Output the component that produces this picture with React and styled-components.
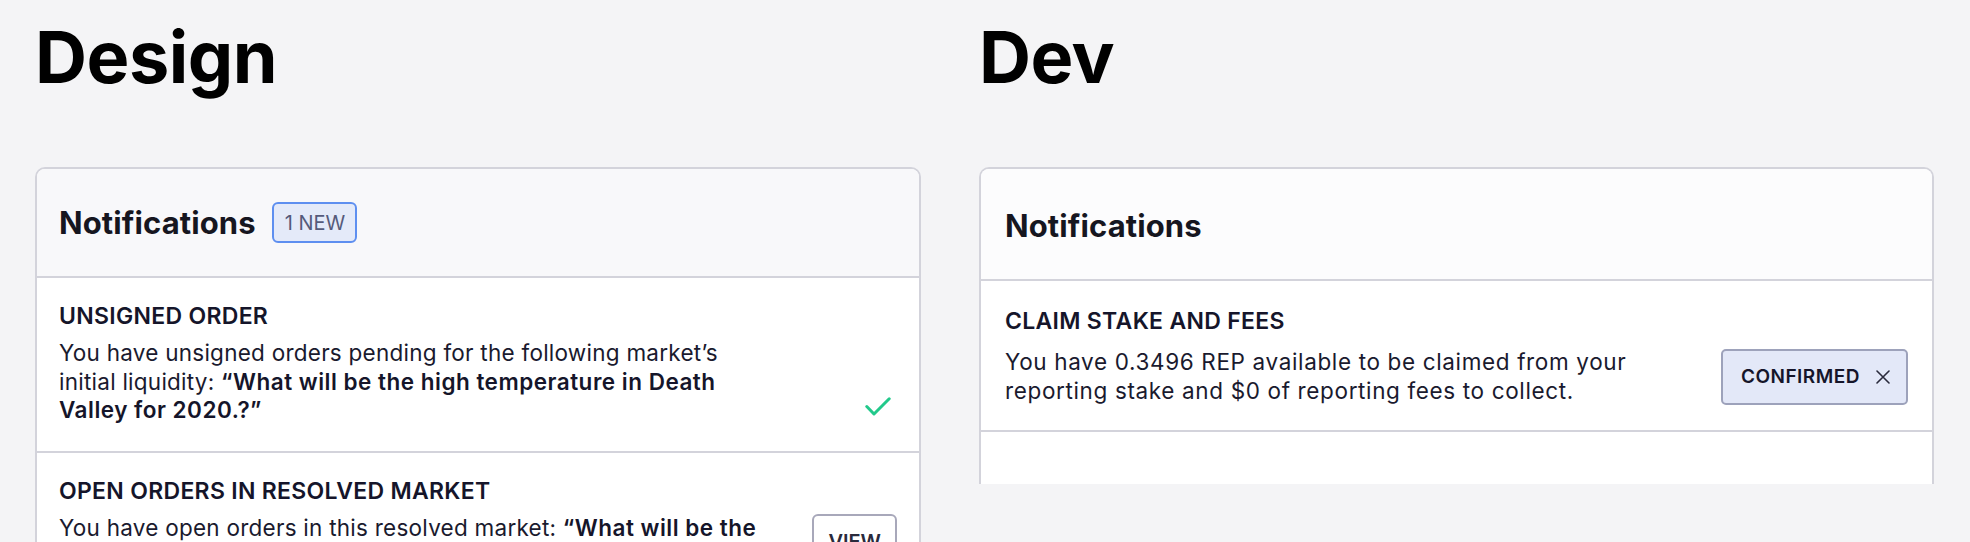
import React from 'react';
import styled, { createGlobalStyle } from 'styled-components';

const GlobalStyle = createGlobalStyle`
  body {
    margin: 0;
    background: #f4f4f6;
    font-family: Inter, "Noto Sans", sans-serif;
    overflow: hidden;
  }
`;

const CheckIcon = () => (
  <svg width="26" height="20" viewBox="0 0 26 20" fill="none">
    <polyline points="1.8,9.5 9,17 24.2,1.8" stroke="#22c98b" strokeWidth="3" strokeLinecap="round" strokeLinejoin="round" />
  </svg>
);

const CloseIcon = () => (
  <svg width="14" height="14" viewBox="0 0 14 14" fill="none">
    <path d="M1 1L13 13M13 1L1 13" stroke="#2a2a3c" strokeWidth="1.6" strokeLinecap="round" />
  </svg>
);

const App = () => {
  return (
    <>
      <GlobalStyle />
      <Page>
        <Column>
          <BigTitle>Design</BigTitle>
          <Card>
            <Header>
              <HeaderTitle>Notifications</HeaderTitle>
              <Badge>1 NEW</Badge>
            </Header>
            <Row>
              <RowTitle>UNSIGNED ORDER</RowTitle>
              <RowBody $gap={9}>
                <BodyText $max={745} $spacing={0.25} $boldSpacing={0.5}>
                  You have unsigned orders pending for the following market’s
                  <br />
                  initial liquidity: <b>“What will be the high temperature in Death</b>
                  <br />
                  <b>Valley for 2020.?”</b>
                </BodyText>
                <CheckWrap>
                  <CheckIcon />
                </CheckWrap>
              </RowBody>
            </Row>
            <Row>
              <RowTitle>OPEN ORDERS IN RESOLVED MARKET</RowTitle>
              <RowBody $gap={9}>
                <BodyText $max={745} $spacing={0.25} $boldSpacing={0.5}>
                  You have open orders in this resolved market: <b>“What will be the</b>
                  <br />
                  <b>high temperature in Death Valley for 2020.?”</b>
                </BodyText>
                <ViewButton>VIEW</ViewButton>
              </RowBody>
            </Row>
          </Card>
        </Column>
        <Column>
          <BigTitle>Dev</BigTitle>
          <Card $clipped>
            <Header $dev>
              <HeaderTitle>Notifications</HeaderTitle>
            </Header>
            <Row $dev>
              <RowTitle>CLAIM STAKE AND FEES</RowTitle>
              <RowBody $gap={13}>
                <BodyText $spacing={0.64}>
                  You have 0.3496 REP available to be claimed from your reporting stake and $0 of
                  reporting fees to collect.
                </BodyText>
                <ConfirmedButton>
                  CONFIRMED
                  <CloseIcon />
                </ConfirmedButton>
              </RowBody>
            </Row>
          </Card>
        </Column>
      </Page>
    </>
  );
};

export default App;

const Page = styled.div`
  display: grid;
  grid-template-columns: 886px 955px;
  column-gap: 58px;
  padding-left: 35px;
`;

const Column = styled.div`
  display: flex;
  flex-direction: column;
`;

const BigTitle = styled.h1`
  margin: 13px 0 67px;
  font-size: 72px;
  line-height: 87px;
  font-weight: 700;
  letter-spacing: -0.5px;
  color: #000;
`;

const Card = styled.div`
  background: #fff;
  border: 2px solid #d3d3db;
  border-radius: 10px;
  overflow: hidden;
  ${(p) =>
    p.$clipped &&
    `
    height: 315px;
    border-bottom: none;
    border-radius: 10px 10px 0 0;
  `}
`;

const Header = styled.div`
  display: flex;
  align-items: center;
  gap: 16px;
  min-height: ${(p) => (p.$dev ? '112px' : '109px')};
  padding: ${(p) => (p.$dev ? '3px 24px 0' : '0 22px')};
  background: ${(p) => (p.$dev ? '#fcfcfd' : '#f8f8fa')};
  border-bottom: 2px solid #d3d3db;
  box-sizing: border-box;
`;

const HeaderTitle = styled.h2`
  margin: 0;
  font-size: 31px;
  font-weight: 700;
  letter-spacing: 0.1px;
  color: #16161f;
`;

const Badge = styled.span`
  display: inline-flex;
  align-items: center;
  height: 41px;
  box-sizing: border-box;
  padding: 0 10px 0 11px;
  border: 2px solid #5e8ff0;
  border-radius: 6px;
  background: #e4eaf9;
  color: #555a7b;
  font-size: 20px;
  font-weight: 400;
`;

const Row = styled.div`
  padding: ${(p) => (p.$dev ? '26px 24px 25px' : '24px 22px 26px')};
  border-bottom: 2px solid #d3d3db;
`;

const RowTitle = styled.div`
  font-size: 23px;
  line-height: 28px;
  font-weight: 600;
  letter-spacing: 0.3px;
  color: #15152a;
`;

const RowBody = styled.div`
  display: flex;
  align-items: center;
  justify-content: space-between;
  gap: 24px;
  margin-top: ${(p) => p.$gap}px;
`;

const BodyText = styled.p`
  margin: 0;
  flex: 1;
  max-width: ${(p) => (p.$max ? `${p.$max}px` : 'none')};
  font-size: 22.5px;
  line-height: 28.5px;
  letter-spacing: ${(p) => p.$spacing}px;
  color: #1a1a2e;

  b {
    font-weight: 600;
    letter-spacing: ${(p) => p.$boldSpacing ?? p.$spacing}px;
    color: #15152a;
  }
`;

const CheckWrap = styled.div`
  align-self: flex-end;
  display: flex;
  margin: 0 6px 8px 0;
`;

const ViewButton = styled.button`
  flex-shrink: 0;
  height: 56px;
  padding: 0 14px;
  border: 2px solid #a8a8ba;
  border-radius: 6px;
  background: #fff;
  color: #2a2a3c;
  font-family: inherit;
  font-size: 20px;
  font-weight: 600;
`;

const ConfirmedButton = styled.button`
  flex-shrink: 0;
  display: inline-flex;
  align-items: center;
  gap: 16px;
  height: 56px;
  padding: 0 16px 0 18px;
  border: 2px solid #9da2bb;
  border-radius: 5px;
  background: #e3e8f8;
  color: #15152a;
  font-family: inherit;
  font-size: 19px;
  font-weight: 600;
  letter-spacing: 0.5px;
`;
